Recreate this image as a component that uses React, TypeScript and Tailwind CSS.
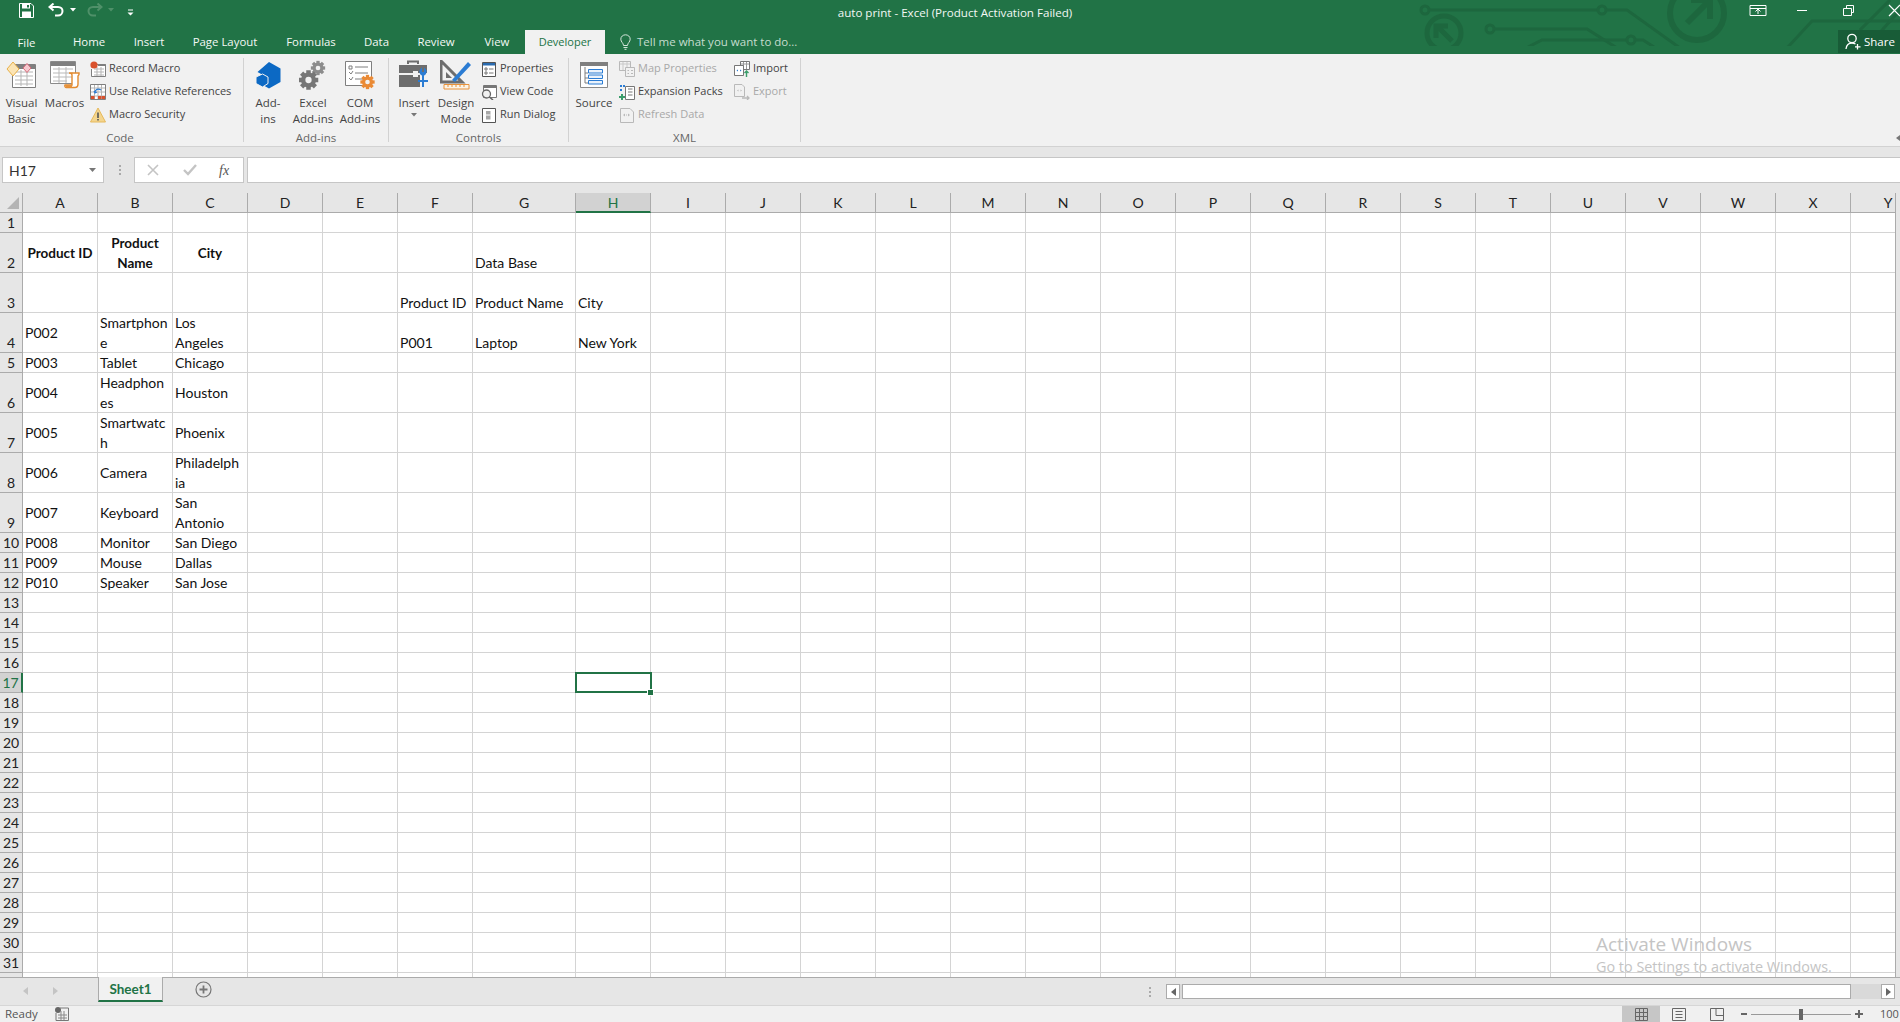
import type { ReactNode } from 'react'

const CELL_FONT = "font-['Lato',sans-serif]"

const TABS = [
	{ label: 'File', width: 'w-[58px] pr-[5px] pt-[1px]' },
	{ label: 'Home', width: 'w-[62px]' },
	{ label: 'Insert', width: 'w-[58px]' },
	{ label: 'Page Layout', width: 'w-[94px]' },
	{ label: 'Formulas', width: 'w-[78px]' },
	{ label: 'Data', width: 'w-[53px]' },
	{ label: 'Review', width: 'w-[66px]' },
	{ label: 'View', width: 'w-[56px]' },
]

const COLUMNS = 'ABCDEFGHIJKLMNOPQRSTUVWXY'.split('')
const TALL_ROWS = [2, 3, 4, 6, 7, 8, 9]
const ROWS = Array.from({ length: 32 }, (_, i) => i + 1)

type CellData = { lines: string[]; center?: boolean; bold?: boolean; align?: boolean }

// keyed by column + row, tall rows wrap the way the sheet does
const CELLS: Record<string, CellData> = {
	A2: { lines: ['Product ID'], center: true, bold: true, align: true },
	B2: { lines: ['Product', 'Name'], center: true, bold: true, align: true },
	C2: { lines: ['City'], center: true, bold: true, align: true },
	G2: { lines: ['Data Base'] },
	F3: { lines: ['Product ID'] },
	G3: { lines: ['Product Name'] },
	H3: { lines: ['City'] },
	A4: { lines: ['P002'], center: true },
	B4: { lines: ['Smartphon', 'e'] },
	C4: { lines: ['Los', 'Angeles'] },
	F4: { lines: ['P001'] },
	G4: { lines: ['Laptop'] },
	H4: { lines: ['New York'] },
	A5: { lines: ['P003'] },
	B5: { lines: ['Tablet'] },
	C5: { lines: ['Chicago'] },
	A6: { lines: ['P004'], center: true },
	B6: { lines: ['Headphon', 'es'] },
	C6: { lines: ['Houston'], center: true },
	A7: { lines: ['P005'], center: true },
	B7: { lines: ['Smartwatc', 'h'] },
	C7: { lines: ['Phoenix'], center: true },
	A8: { lines: ['P006'], center: true },
	B8: { lines: ['Camera'], center: true },
	C8: { lines: ['Philadelph', 'ia'] },
	A9: { lines: ['P007'], center: true },
	B9: { lines: ['Keyboard'], center: true },
	C9: { lines: ['San', 'Antonio'] },
	A10: { lines: ['P008'] },
	B10: { lines: ['Monitor'] },
	C10: { lines: ['San Diego'] },
	A11: { lines: ['P009'] },
	B11: { lines: ['Mouse'] },
	C11: { lines: ['Dallas'] },
	A12: { lines: ['P010'] },
	B12: { lines: ['Speaker'] },
	C12: { lines: ['San Jose'] },
}

function CircuitPattern() {
	return (
		<svg
			aria-hidden="true"
			className="absolute top-0 left-[1400px] w-[500px] h-[46px]"
			viewBox="0 0 500 46"
			fill="none"
			stroke="#1d673e"
			strokeWidth="3"
		>
			<circle cx="25" cy="10" r="4" />
			<path d="M29 10H198" />
			<circle cx="202" cy="10" r="4" />
			<path d="M206 10H227L280 48" />
			<circle cx="297" cy="13" r="27" strokeWidth="6" />
			<path d="M287 23L309 1M291 0H310V19" strokeWidth="6" />
			<circle cx="44" cy="33" r="17" strokeWidth="5" />
			<path d="M52 41L38 27M36 38V26H48" strokeWidth="5" />
			<circle cx="90" cy="29" r="4" />
			<path d="M94 29H187L217 48" />
			<path d="M128 47L142 40H227" />
			<circle cx="231" cy="40" r="4" />
			<path d="M235 40H243L254 47" />
			<path d="M388 47L412 21H500" />
			<path d="M467 47L500 10M460 30L490 0" />
		</svg>
	)
}

function QuickAccess() {
	return (
		<div className="flex items-start h-[30px]">
			<svg aria-hidden="true" className="ml-[19px] mt-[3px] w-[15px] h-[15px]" viewBox="0 0 15 15">
				<path d="M0.5 0.5H12L14.5 3V14.5H0.5Z" fill="none" stroke="#fff" />
				<path d="M3 1H11V5.5H3ZM3 8.5H12V14H3Z" fill="#fff" />
				<path d="M8 2H10V4.5H8Z" fill="#217346" />
			</svg>
			<svg aria-hidden="true" className="ml-[14px] mt-[3px] w-[16px] h-[14px]" viewBox="0 0 16 14" fill="none">
				<path d="M2 4H10C13 4 14.5 6 14.5 8C14.5 10.5 12.5 12.5 10 12.5H7" stroke="#fff" strokeWidth="2" />
				<path d="M5.5 0.5L1.5 4L5.5 7.5" stroke="#fff" strokeWidth="2" />
			</svg>
			<svg aria-hidden="true" className="ml-[6px] mt-[8px] w-[6px] h-[4px]" viewBox="0 0 6 4">
				<path d="M0 0H6L3 3.5Z" fill="#fff" />
			</svg>
			<svg aria-hidden="true" className="ml-[11px] mt-[3px] w-[16px] h-[14px]" viewBox="0 0 16 14" fill="none">
				<path d="M14 4H6C3 4 1.5 6 1.5 8C1.5 10.5 3.5 12.5 6 12.5H9" stroke="#4f9069" strokeWidth="2" />
				<path d="M10.5 0.5L14.5 4L10.5 7.5" stroke="#4f9069" strokeWidth="2" />
			</svg>
			<svg aria-hidden="true" className="ml-[5px] mt-[8px] w-[6px] h-[4px]" viewBox="0 0 6 4">
				<path d="M0 0H6L3 3.5Z" fill="#4f9069" />
			</svg>
			<svg aria-hidden="true" className="ml-[13px] mt-[9px] w-[7px] h-[7px]" viewBox="0 0 7 7">
				<path d="M1 0.5H6V1.5H1ZM0.5 3.5H6.5L3.5 6.5Z" fill="#fff" />
			</svg>
		</div>
	)
}

function WindowControls() {
	return (
		<svg aria-hidden="true" className="absolute top-0 left-[1740px] w-[160px] h-[22px]" viewBox="0 0 160 22" fill="none" stroke="#fff">
			<path d="M10 5.5H26V15.5H10ZM10 8.5H26" />
			<path d="M18 14V9.5M15.5 11.5L18 9L20.5 11.5" />
			<path d="M57 10.5H67" />
			<path d="M103.5 8.5H111.5V15.5H103.5ZM106.5 8V5.5H113.5V12.5H112" />
			<path d="M149 5L160 16M160 5L149 16" strokeWidth="1.2" />
		</svg>
	)
}

function TitleBar() {
	return (
		<div className="relative h-[54px] bg-[#217346] text-white shrink-0 overflow-hidden">
			<CircuitPattern />
			<QuickAccess />
			<div className="absolute top-[4px] left-0 w-[1910px] text-center text-[11.6px] leading-[17px] text-[#f2f7f4]">
				auto print - Excel (Product Activation Failed)
			</div>
			<WindowControls />
			<div className="relative flex h-[24px]">
				{TABS.map((tab) => (
					<div key={tab.label} className={`${tab.width} text-center text-[11.4px] leading-[24px] text-[#f4f8f5]`}>
						{tab.label}
					</div>
				))}
				<div className="w-[80px] bg-[#f1f1f1] text-center text-[11px] leading-[24px] text-[#217346]">Developer</div>
				<svg aria-hidden="true" className="ml-[15px] mt-[4px] w-[11px] h-[16px]" viewBox="0 0 11 16" fill="none" stroke="#d5e5db">
					<path d="M3.5 11.5C3.5 9 0.8 8 0.8 5.2C0.8 2.6 3 0.8 5.5 0.8C8 0.8 10.2 2.6 10.2 5.2C10.2 8 7.5 9 7.5 11.5ZM3.5 13.5H7.5M4.5 15.3H6.5" />
				</svg>
				<div className="ml-[6px] text-[11.5px] leading-[24px] text-[#c6ddcf]">Tell me what you want to do...</div>
				<div className="absolute top-0 left-[1838px] flex items-center w-[62px] h-[23px] bg-[#185c37]">
					<svg aria-hidden="true" className="ml-[7px] w-[16px] h-[17px]" viewBox="0 0 16 17" fill="none" stroke="#fff" strokeWidth="1.3">
						<circle cx="7" cy="5.5" r="4.2" />
						<path d="M1 16C1.5 12 4 10 7 10C8.5 10 9.5 10.5 10.5 11M12.5 11V16.5M10 13.8H15.5" />
					</svg>
					<span className="ml-[3px] text-[11.5px] text-white">Share</span>
				</div>
			</div>
		</div>
	)
}

function Sheetlet() {
	return (
		<g>
			<path d="M1.5 1.5H24.5V24.5H1.5Z" fill="#fff" stroke="#7f7f7f" />
			<path d="M2 2H24V6H2Z" fill="#7f7f7f" />
			<path d="M4 9H22M4 13H22M4 17H22M4 21H22M10 7V23M16 7V23" stroke="#b5b5b5" />
		</g>
	)
}

function VisualBasicIcon() {
	return (
		<svg aria-hidden="true" className="w-[32px] h-[30px]" viewBox="0 0 32 30">
			<g transform="translate(5 3)">
				<Sheetlet />
			</g>
			<path d="M1 9L7 2L13 9L7 16Z" fill="#fbe4b4" stroke="#e8b04a" />
			<path d="M17 8L21 3.5L25 8L21 12.5Z" fill="#f7c9cf" stroke="#d76a7a" />
		</svg>
	)
}

function MacrosIcon() {
	return (
		<svg aria-hidden="true" className="w-[32px] h-[30px]" viewBox="0 0 32 30">
			<path d="M1.5 1.5H26.5V23.5H1.5Z" fill="#fff" stroke="#8a8a8a" />
			<path d="M2 2H26V6H2Z" fill="#7f7f7f" />
			<path d="M4 9H24M4 13H24M4 17H24M4 21H18M10 7V23M17 7V23" stroke="#b9b9b9" />
			<path d="M20 13H30V14.5C30 15 29 15.5 29 16V24C29 26.5 27.5 27.5 26 27.5H17C16 27.5 15.5 26 16 25H23V15C23 14 22 13 20 13Z" fill="#fff" stroke="#e38a2e" strokeWidth="1.4" />
			<path d="M16 25H23V27.5H17Z" fill="#e8923a" />
		</svg>
	)
}

function AddInsIcon() {
	return (
		<svg aria-hidden="true" className="w-[28px] h-[30px]" viewBox="0 0 28 30">
			<path d="M15 2L26.5 8.5V22L15 28.5L8 24.5V14.5L3.5 12L15 2Z" fill="#0c69c4" />
			<path d="M8.5 14L14 17V23.5L8.5 27L2 23.5V17Z" fill="#0c69c4" stroke="#f1f1f1" />
		</svg>
	)
}

function Gear({ cx, cy, r, color }: { cx: number; cy: number; r: number; color: string }) {
	const teeth = [0, 45, 90, 135]
	return (
		<g>
			{teeth.map((a) => (
				<rect key={a} x={cx - r * 0.3} y={cy - r * 1.3} width={r * 0.6} height={r * 2.6} fill={color} transform={`rotate(${a} ${cx} ${cy})`} />
			))}
			<circle cx={cx} cy={cy} r={r} fill={color} />
			<circle cx={cx} cy={cy} r={r * 0.42} fill="#f1f1f1" />
		</g>
	)
}

function ExcelAddInsIcon() {
	return (
		<svg aria-hidden="true" className="w-[28px] h-[30px]" viewBox="0 0 28 30">
			<Gear cx={19} cy={8} r={5.5} color="#8c8c8c" />
			<Gear cx={9.5} cy={20} r={7.5} color="#767676" />
		</svg>
	)
}

function ComAddInsIcon() {
	return (
		<svg aria-hidden="true" className="w-[32px] h-[30px]" viewBox="0 0 32 30">
			<path d="M1.5 1.5H27.5V25.5H1.5Z" fill="#fff" stroke="#7f7f7f" />
			<path d="M5 6H8V9H5ZM11 7H24M5 12L7 14L9 11M11 13H24M5 18L7 20L9 17M11 19H19" fill="none" stroke="#7f7f7f" />
			<Gear cx={23.5} cy={22} r={5.5} color="#ea8a35" />
		</svg>
	)
}

function InsertIcon() {
	return (
		<svg aria-hidden="true" className="w-[32px] h-[30px]" viewBox="0 0 32 30">
			<path d="M10 4V1.5H20V4" fill="none" stroke="#6d6d6d" strokeWidth="2" />
			<path d="M1 5H29V13H20V11H15V13H1ZM1 15H15V17H20V15H22V27H1Z" fill="#6d6d6d" />
			<path d="M25 12V27M25 15C22 14 22 11 23 10V13H27V10C28 11 28 14 25 15" fill="none" stroke="#2b7cd3" strokeWidth="2" />
			<path d="M20 20H30V22H20Z" fill="#2b7cd3" />
		</svg>
	)
}

function DesignModeIcon() {
	return (
		<svg aria-hidden="true" className="w-[32px] h-[30px]" viewBox="0 0 32 30">
			<path d="M1 1V22H22Z" fill="none" stroke="#6d6d6d" strokeWidth="3" />
			<path d="M6 12V18H12Z" fill="#6d6d6d" />
			<path d="M12 20L28 2L31 5L15 22Z" fill="#2b7cd3" />
			<path d="M4 24.5H29V29H4Z" fill="#fbf4e8" stroke="#e8923a" />
			<path d="M8 25V27M12 25V27M16 25V27M20 25V27M24 25V27" stroke="#e8923a" />
		</svg>
	)
}

function SourceIcon() {
	return (
		<svg aria-hidden="true" className="w-[30px] h-[30px]" viewBox="0 0 30 30">
			<path d="M1.5 2.5H28.5V27.5H1.5Z" fill="#fff" stroke="#8a8a8a" />
			<path d="M1 2H29V6H1Z" fill="#7f7f7f" />
			<path d="M6 7V23H9M6 13H9M6 18H9" fill="none" stroke="#7f7f7f" />
			<path d="M9.5 9.5H23.5V13H9.5ZM9.5 15H23.5V18.5H9.5ZM9.5 20.5H23.5V24H9.5Z" fill="#eaf2fb" stroke="#2b7cd3" />
		</svg>
	)
}

type SmallIconKind = 'record' | 'relative' | 'security' | 'properties' | 'viewcode' | 'dialog' | 'map' | 'expansion' | 'refresh' | 'import' | 'export'

function SmallIcon({ kind }: { kind: SmallIconKind }) {
	const body = {
		record: (
			<>
				<path d="M4 3.5H15.5V15.5H1.5V8" fill="#fff" stroke="#7f7f7f" />
				<path d="M8 3H15.5V5H8Z" fill="#7f7f7f" />
				<path d="M4 8H14M4 11H14M4 14H14M7 6V15M11 6V15" stroke="#b5b5b5" />
				<circle cx="4" cy="4" r="3.6" fill="#d9512c" />
			</>
		),
		relative: (
			<>
				<path d="M0.5 0.5H15.5V15.5H0.5Z" fill="#fff" stroke="#7f7f7f" />
				<path d="M1 4H15M1 8H15M1 12H15M4.5 1V15M8 1V15M11.5 1V15" stroke="#b5b5b5" />
				<path d="M11 6C8 4 5 5.5 5 8.5M4 7L5 9L7 8" fill="none" stroke="#2b7cd3" strokeWidth="1.2" />
				<path d="M1 12H4.5V15H1ZM8 12H11.5V15H8Z" fill="#d9512c" />
				<path d="M12 12H15V15H12Z" fill="#d9512c" />
			</>
		),
		security: (
			<>
				<path d="M8 1L15.5 15H0.5Z" fill="#f4d58d" stroke="#e6b95c" />
				<path d="M7.2 5.5H8.8V11H7.2ZM7.2 12H8.8V13.6H7.2Z" fill="#555" />
			</>
		),
		properties: (
			<>
				<path d="M1.5 1.5H14.5V15.5H1.5Z" fill="#fff" stroke="#555" />
				<path d="M2 2H14V4.5H2Z" fill="#2b6cb0" />
				<path d="M4 7H6V9H4ZM4 11H6V13H4ZM8 8H12.5M8 12H12.5" fill="none" stroke="#777" />
			</>
		),
		viewcode: (
			<>
				<path d="M2.5 1.5H15.5V13.5H2.5Z" fill="#fff" stroke="#777" />
				<path d="M3 2H15V4H3Z" fill="#777" />
				<circle cx="5.5" cy="10" r="4" fill="#f1f1f1" stroke="#666" strokeWidth="1.3" />
				<path d="M8.5 13L12 16" stroke="#666" strokeWidth="1.6" />
			</>
		),
		dialog: (
			<>
				<path d="M1.5 1.5H14.5V15.5H1.5Z" fill="#fff" stroke="#555" />
				<path d="M5 4H9.5V12.5H5Z" fill="#a8a8a8" />
				<path d="M5 8H9.5" stroke="#fff" />
			</>
		),
		map: (
			<>
				<path d="M0.5 0.5H11.5V9.5H0.5Z" fill="#f1f1f1" stroke="#b9b9b9" />
				<path d="M1 3H11M4 1V9M8 1V9" stroke="#c9c9c9" />
				<path d="M6.5 6.5H15.5V15.5H6.5Z" fill="#f1f1f1" stroke="#b9b9b9" />
				<path d="M8.5 9.5H10M12 9.5H14M8.5 12.5H10M12 12.5H14" stroke="#b9b9b9" />
			</>
		),
		expansion: (
			<>
				<path d="M6.5 2.5H15.5V15.5H6.5Z" fill="#fff" stroke="#777" />
				<path d="M9 5H13.5M9 8H13.5M9 11H13.5" stroke="#777" />
				<path d="M1 1H3V3H1ZM4 1H6V3H4ZM1 5H3V7H1Z" fill="#2b7cd3" />
				<path d="M0 12H6V14H0ZM2 10H4V16H2Z" fill="#3a9d6a" />
			</>
		),
		refresh: (
			<>
				<path d="M1.5 1.5H11L14.5 5V15.5H1.5Z" fill="#f1f1f1" stroke="#b9b9b9" />
				<path d="M4 8L6 6.5V9.5ZM11 8L9 6.5V9.5Z" fill="#b9b9b9" />
				<path d="M7 8H8" stroke="#b9b9b9" />
			</>
		),
		import: (
			<>
				<path d="M6.5 0.5H15.5V8.5H6.5Z" fill="#fff" stroke="#777" />
				<path d="M7 3H15M9.5 1V8M12.5 1V8" stroke="#999" />
				<path d="M0.5 4.5H9.5V14.5H0.5Z" fill="#fff" stroke="#777" />
				<path d="M2.5 9.5L4 8.5V10.5ZM7.5 9.5L6 8.5V10.5Z" fill="#2b7cd3" />
				<path d="M12.5 16V10M10.5 12L12.5 10L14.5 12" fill="none" stroke="#3a9d6a" strokeWidth="1.4" />
			</>
		),
		export: (
			<>
				<path d="M0.5 0.5H8L10.5 3V12.5H0.5Z" fill="#f1f1f1" stroke="#b9b9b9" />
				<path d="M3 6.5L4.5 5.5V7.5ZM8 6.5L6.5 5.5V7.5Z" fill="#b9b9b9" />
				<path d="M8 14H15M13 12L15 14L13 16" fill="none" stroke="#b9b9b9" strokeWidth="1.3" />
			</>
		),
	}[kind]

	return (
		<svg aria-hidden="true" className="w-[16px] h-[16px] shrink-0" viewBox="0 0 16 16">
			{body}
		</svg>
	)
}

function LargeButton({ lines, icon, width, caret }: { lines: string[]; icon: ReactNode; width: string; caret?: boolean }) {
	return (
		<div className={`${width} flex flex-col items-center shrink-0`}>
			<div className="flex items-center justify-center h-[36px] pt-[5px]">{icon}</div>
			<div className="mt-[5px] text-[11.5px] leading-[16px] text-center text-[#444] whitespace-nowrap">
				{lines.map((line) => (
					<div key={line}>{line}</div>
				))}
			</div>
			{caret && (
				<svg aria-hidden="true" className="mt-[2px] w-[6px] h-[4px]" viewBox="0 0 6 4">
					<path d="M0 0H6L3 3.5Z" fill="#777" />
				</svg>
			)}
		</div>
	)
}

function SmallButton({ label, kind, disabled }: { label: string; kind: SmallIconKind; disabled?: boolean }) {
	return (
		<div className="flex items-center h-[23px] gap-[3px]">
			<SmallIcon kind={kind} />
			<span className={`text-[11px] whitespace-nowrap ${disabled ? 'text-[#a8a8a8]' : 'text-[#444]'}`}>{label}</span>
		</div>
	)
}

function RibbonGroup({ label, width, labelPad, children }: { label: string; width: string; labelPad?: string; children: ReactNode }) {
	return (
		<>
			<div className={`${width} flex flex-col shrink-0 h-[92px]`}>
				<div className="flex flex-1 min-h-0">{children}</div>
				<div className={`h-[16px] text-center text-[11.5px] leading-[16px] text-[#666] ${labelPad ?? ''}`}>{label}</div>
			</div>
			<div className="w-px h-[84px] mt-[4px] bg-[#d2d2d2] shrink-0" />
		</>
	)
}

function Ribbon() {
	return (
		<div className="relative flex h-[93px] shrink-0 bg-[#f1f1f1] border-b border-[#d2d2d2] font-['Open_Sans',sans-serif]">
			<RibbonGroup label="Code" width="w-[243px]" labelPad="pr-[3px]">
				<LargeButton width="w-[43px]" lines={['Visual', 'Basic']} icon={<VisualBasicIcon />} />
				<LargeButton width="w-[43px]" lines={['Macros']} icon={<MacrosIcon />} />
				<div className="ml-[4px] pt-[3px]">
					<SmallButton kind="record" label="Record Macro" />
					<SmallButton kind="relative" label="Use Relative References" />
					<SmallButton kind="security" label="Macro Security" />
				</div>
			</RibbonGroup>
			<RibbonGroup label="Add-ins" width="w-[144px]">
				<div className="flex pl-[2px]">
					<LargeButton width="w-[44px]" lines={['Add-', 'ins']} icon={<AddInsIcon />} />
					<LargeButton width="w-[46px]" lines={['Excel', 'Add-ins']} icon={<ExcelAddInsIcon />} />
					<LargeButton width="w-[48px]" lines={['COM', 'Add-ins']} icon={<ComAddInsIcon />} />
				</div>
			</RibbonGroup>
			<RibbonGroup label="Controls" width="w-[179px]">
				<div className="flex pl-[5px]">
					<LargeButton width="w-[40px]" lines={['Insert']} icon={<InsertIcon />} caret />
					<LargeButton width="w-[44px]" lines={['Design', 'Mode']} icon={<DesignModeIcon />} />
					<div className="ml-[3px] pt-[3px]">
						<SmallButton kind="properties" label="Properties" />
						<SmallButton kind="viewcode" label="View Code" />
						<SmallButton kind="dialog" label="Run Dialog" />
					</div>
				</div>
			</RibbonGroup>
			<RibbonGroup label="XML" width="w-[231px]">
				<div className="flex pl-[5px]">
					<LargeButton width="w-[40px]" lines={['Source']} icon={<SourceIcon />} />
					<div className="ml-[5px] w-[115px] pt-[3px]">
						<SmallButton kind="map" label="Map Properties" disabled />
						<SmallButton kind="expansion" label="Expansion Packs" />
						<SmallButton kind="refresh" label="Refresh Data" disabled />
					</div>
					<div className="pt-[3px]">
						<SmallButton kind="import" label="Import" />
						<SmallButton kind="export" label="Export" disabled />
					</div>
				</div>
			</RibbonGroup>
			<svg aria-hidden="true" className="absolute right-0 bottom-[5px] w-[5px] h-[6px]" viewBox="0 0 5 6">
				<path d="M5 0V6L1 3Z" fill="#777" />
			</svg>
		</div>
	)
}

function FormulaBar() {
	return (
		<div className="flex h-[46px] pt-[10px] shrink-0 bg-[#e6e6e6] font-['Open_Sans',sans-serif]">
			<div className="flex items-center justify-between ml-[2px] w-[102px] h-[26px] pl-[6px] pr-[7px] bg-white border border-[#c6c6c6]">
				<span className={`${CELL_FONT} text-[14px] text-[#333]`}>H17</span>
				<svg aria-hidden="true" className="w-[7px] h-[4px]" viewBox="0 0 7 4">
					<path d="M0 0H7L3.5 4Z" fill="#777" />
				</svg>
			</div>
			<div className="flex flex-col justify-center gap-[2px] ml-[15px] w-[2px] h-[26px]">
				<div className="w-[2px] h-[2px] bg-[#aaa]" />
				<div className="w-[2px] h-[2px] bg-[#aaa]" />
				<div className="w-[2px] h-[2px] bg-[#aaa]" />
			</div>
			<div className="flex items-center ml-[13px] w-[110px] h-[26px] bg-white border border-[#c6c6c6]">
				<svg aria-hidden="true" className="ml-[12px] w-[12px] h-[12px]" viewBox="0 0 12 12" fill="none" stroke="#c4c4c4" strokeWidth="1.6">
					<path d="M1 1L11 11M11 1L1 11" />
				</svg>
				<svg aria-hidden="true" className="ml-[24px] w-[14px] h-[12px]" viewBox="0 0 14 12" fill="none" stroke="#c4c4c4" strokeWidth="2.4">
					<path d="M1 6L5 10L13 1" />
				</svg>
				<span className="ml-[22px] font-['Liberation_Serif',serif] italic text-[14px] text-[#555]">fx</span>
			</div>
			<div className="ml-[3px] flex-1 h-[26px] bg-white border border-[#c6c6c6] border-r-0" />
		</div>
	)
}

function colWidth(col: string) {
	return col === 'G' ? 'w-[103px]' : 'w-[75px]'
}

function ColumnHeader() {
	return (
		<div className="flex h-[20px] shrink-0">
			<div className="relative w-[23px] h-[20px] shrink-0 bg-[#e6e6e6] border-r border-b border-[#ababab]">
				<svg aria-hidden="true" className="absolute top-[4px] left-[7px] w-[12px] h-[12px]" viewBox="0 0 12 12">
					<path d="M12 0V12H0Z" fill="#b4b4b4" />
				</svg>
			</div>
			{COLUMNS.map((col) => (
				<div
					key={col}
					className={`${colWidth(col)} shrink-0 h-[20px] text-center text-[14px] leading-[19px] border-r border-[#ababab] ${
						col === 'H'
							? 'bg-[#d2d2d2] text-[#217346] border-b-2 border-b-[#217346]'
							: 'bg-[#e6e6e6] text-[#222] border-b border-b-[#ababab]'
					}`}
				>
					{col}
				</div>
			))}
		</div>
	)
}

function Cell({ col, row }: { col: string; row: number }) {
	const data = CELLS[`${col}${row}`]
	const selected = col === 'H' && row === 17

	return (
		<div
			className={`relative ${colWidth(col)} shrink-0 h-full border-r border-b border-[#d4d4d4] flex flex-col px-[2px] leading-[20px] whitespace-nowrap text-[#111] ${
				data?.center ? 'justify-center' : 'justify-end'
			} ${data?.align ? 'items-center' : 'items-start'} ${data?.bold ? 'font-bold text-[13.5px]' : 'text-[14px]'}`}
		>
			{data && (
				<div className={data.align ? 'text-center' : data.center ? '' : '-mb-px'}>
					{data.lines.map((line) => (
						<div key={line}>{line}</div>
					))}
				</div>
			)}
			{selected && (
				<div className="absolute z-10 -top-[1px] -left-[1px] w-[77px] h-[21px] border-2 border-[#217346]">
					<div className="absolute -right-[4px] -bottom-[5px] w-[7px] h-[7px] bg-[#217346] border border-white" />
				</div>
			)}
		</div>
	)
}

function Grid() {
	return (
		<div className={`flex-1 min-h-0 flex bg-[#e6e6e6] ${CELL_FONT}`}>
			<div className="w-[1896px] flex flex-col overflow-hidden bg-white border-r border-[#ababab]">
				<ColumnHeader />
				{ROWS.map((row) => (
					<div key={row} className={`flex shrink-0 ${TALL_ROWS.includes(row) ? 'h-[40px]' : 'h-[20px]'}`}>
						<div
							className={`w-[23px] shrink-0 h-full flex items-end justify-center text-[14px] leading-[19px] border-b border-[#ababab] ${
								row === 17
									? 'bg-[#d2d2d2] text-[#217346] border-r-2 border-r-[#217346]'
									: 'bg-[#e6e6e6] text-[#222] border-r border-r-[#ababab]'
							}`}
						>
							{row < 32 ? row : ''}
						</div>
						{COLUMNS.map((col) => (
							<Cell key={col} col={col} row={row} />
						))}
					</div>
				))}
			</div>
		</div>
	)
}

function ActivateWatermark() {
	return (
		<div className="absolute top-[930px] left-[1596px] text-[#c4c4c4] font-['Open_Sans',sans-serif] pointer-events-none whitespace-nowrap">
			<div className="text-[19px] leading-[28px]">Activate Windows</div>
			<div className="text-[14.4px] leading-[18px]">Go to Settings to activate Windows.</div>
		</div>
	)
}

function SheetTabs() {
	return (
		<div className="flex h-[28px] shrink-0 bg-[#e6e6e6] border-t border-[#ababab] font-['Open_Sans',sans-serif]">
			<svg aria-hidden="true" className="ml-[23px] mt-[9px] w-[36px] h-[9px] shrink-0" viewBox="0 0 36 9">
				<path d="M5 0V8L0 4Z" fill="#c4c4c4" />
				<path d="M30 0V8L35 4Z" fill="#c4c4c4" />
			</svg>
			<div className={`ml-[39px] w-[65px] h-[25px] -mt-[1px] shrink-0 bg-[#f1f1f1] border-x border-[#ababab] border-b-2 border-b-[#217346] text-center text-[13.5px] leading-[24px] font-bold text-[#217346] ${CELL_FONT}`}>
				Sheet1
			</div>
			<svg aria-hidden="true" className="ml-[32px] mt-[3px] w-[17px] h-[17px] shrink-0" viewBox="0 0 17 17" fill="none" stroke="#777">
				<circle cx="8.5" cy="8.5" r="7.5" strokeWidth="1.2" />
				<path d="M8.5 4.5V12.5M4.5 8.5H12.5" strokeWidth="1.8" />
			</svg>
			<div className="flex flex-col gap-[2px] ml-[937px] mt-[9px] w-[2px] shrink-0">
				<div className="w-[2px] h-[2px] bg-[#aaa]" />
				<div className="w-[2px] h-[2px] bg-[#aaa]" />
				<div className="w-[2px] h-[2px] bg-[#aaa]" />
			</div>
			<div className="flex ml-[15px] mt-[6px] w-[729px] h-[15px] shrink-0 bg-[#d9d9d9]">
				<div className="flex items-center justify-center w-[14px] h-[15px] bg-white border border-[#ababab]">
					<svg aria-hidden="true" className="w-[5px] h-[8px]" viewBox="0 0 5 8">
						<path d="M5 0V8L0 4Z" fill="#666" />
					</svg>
				</div>
				<div className="ml-[2px] w-[669px] h-[15px] bg-white border border-[#ababab]" />
				<div className="ml-[30px] flex items-center justify-center w-[14px] h-[15px] bg-white border border-[#ababab]">
					<svg aria-hidden="true" className="w-[5px] h-[8px]" viewBox="0 0 5 8">
						<path d="M0 0V8L5 4Z" fill="#666" />
					</svg>
				</div>
			</div>
		</div>
	)
}

function StatusBar() {
	return (
		<div className="flex items-center h-[17px] shrink-0 bg-[#f0f0f0] border-t border-[#d6d6d6] font-['Open_Sans',sans-serif] overflow-hidden">
			<span className="ml-[5px] w-[50px] shrink-0 text-[11.5px] text-[#555]">Ready</span>
			<svg aria-hidden="true" className="w-[14px] h-[14px] shrink-0" viewBox="0 0 14 14">
				<circle cx="3" cy="3" r="3" fill="#666" />
				<path d="M5 1H13.5V13.5H1V6" fill="none" stroke="#777" />
				<path d="M3 8H12M3 11H12M6 4V13M9 4V13" stroke="#888" />
			</svg>
			<div className="ml-[1553px] flex items-center justify-center w-[38px] h-[17px] shrink-0 bg-[#c6c6c6]">
				<svg aria-hidden="true" className="w-[13px] h-[13px]" viewBox="0 0 13 13" fill="none" stroke="#666">
					<path d="M0.5 0.5H12.5V12.5H0.5ZM0.5 4.5H12.5M0.5 8.5H12.5M4.5 0.5V12.5M8.5 0.5V12.5" />
				</svg>
			</div>
			<svg aria-hidden="true" className="ml-[12px] w-[14px] h-[13px] shrink-0" viewBox="0 0 14 13" fill="none" stroke="#666">
				<path d="M0.5 0.5H13.5V12.5H0.5ZM3.5 3.5H10.5M3.5 6.5H10.5M3.5 9.5H10.5" />
			</svg>
			<svg aria-hidden="true" className="ml-[24px] w-[14px] h-[13px] shrink-0" viewBox="0 0 14 13" fill="none" stroke="#666">
				<path d="M0.5 0.5H13.5V12.5H0.5ZM6 0.5V7.5H13.5" />
			</svg>
			<div className="ml-[17px] w-[6px] h-[2px] shrink-0 bg-[#666]" />
			<div className="relative ml-[4px] w-[100px] h-px shrink-0 bg-[#999]">
				<div className="absolute -top-[5px] left-[48px] w-[4px] h-[11px] bg-[#666]" />
			</div>
			<svg aria-hidden="true" className="ml-[4px] w-[8px] h-[8px] shrink-0" viewBox="0 0 8 8">
				<path d="M3 0H5V3H8V5H5V8H3V5H0V3H3Z" fill="#666" />
			</svg>
			<span className="ml-[17px] text-[11px] text-[#555] whitespace-nowrap">100</span>
		</div>
	)
}

export default function App() {
	return (
		<div className="relative w-[1900px] h-[1022px] flex flex-col overflow-hidden bg-[#e6e6e6] font-['Open_Sans',sans-serif]">
			<TitleBar />
			<Ribbon />
			<FormulaBar />
			<Grid />
			<SheetTabs />
			<StatusBar />
			<ActivateWatermark />
		</div>
	)
}
